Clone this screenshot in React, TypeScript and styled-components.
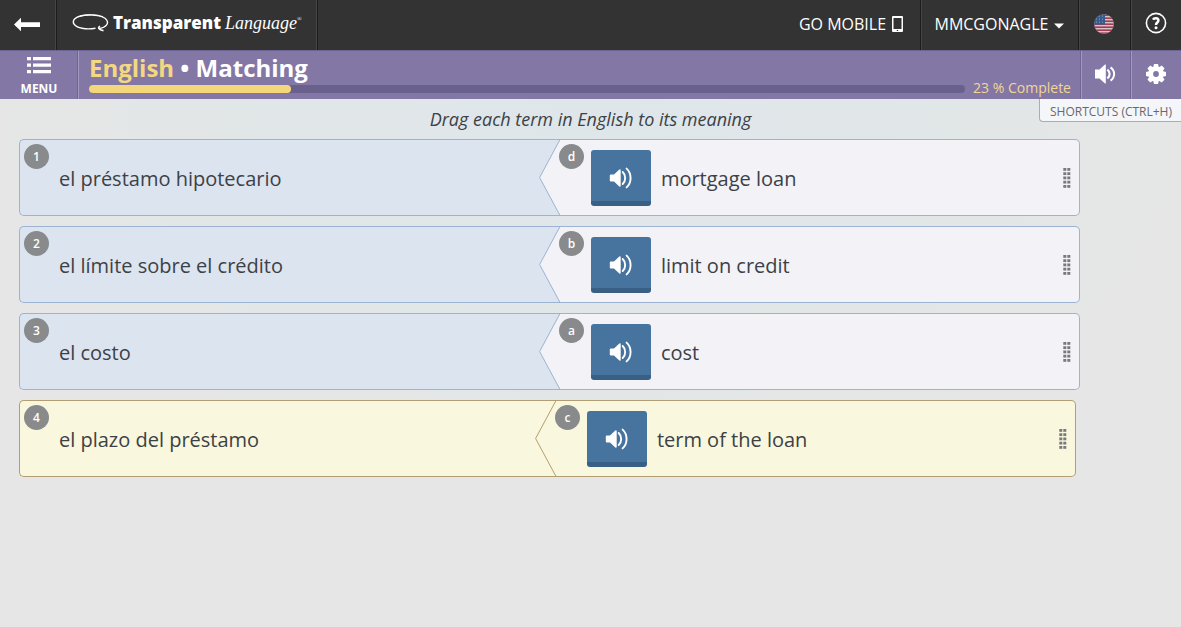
import React from 'react';
import styled, { createGlobalStyle } from 'styled-components';

const GlobalStyle = createGlobalStyle`
  *, *::before, *::after { box-sizing: border-box; }
  body {
    margin: 0;
    background: #e6e6e6;
    color: #3c4146;
    font-family: 'Open Sans', 'Noto Sans', sans-serif;
  }
  button { font-family: inherit; cursor: pointer; }
`;

const Page = styled.div`
  min-height: 100vh;
  background: radial-gradient(ellipse 50% 56% at 50% 20%, #dfe6ea 0%, #e1e6e8 55%, #e6e6e6 100%);
`;

const TopBar = styled.header`
  display: flex;
  height: 50px;
  background: #333333;
  color: #ffffff;
`;

const Spacer = styled.div`
  flex: 1;
`;

const TopButton = styled.button<{ $width: number; $edge?: 'left' | 'right' }>`
  display: flex;
  align-items: center;
  justify-content: center;
  gap: 6px;
  width: ${(p) => p.$width}px;
  padding: 0 0 2px;
  border: 0;
  border-left: ${(p) => (p.$edge === 'left' ? '1px solid #1c1c1c' : '0')};
  border-right: ${(p) => (p.$edge === 'right' ? '1px solid #1c1c1c' : '0')};
  box-shadow: ${(p) => (p.$edge === 'left' ? 'inset 1px 0 #454545' : p.$edge === 'right' ? 'inset -1px 0 #454545' : 'none')};
  background: transparent;
  color: inherit;
  font-size: 16px;
  line-height: 20px;
  white-space: nowrap;
`;

const Logo = styled.a`
  display: flex;
  align-items: center;
  gap: 4px;
  width: 261px;
  padding: 0 0 4px 15px;
  border-right: 1px solid #1c1c1c;
  box-shadow: inset -1px 0 #454545;
  color: #ffffff;
  text-decoration: none;
  white-space: nowrap;
`;

const LogoBold = styled.span`
  font-size: 17px;
  font-weight: 800;
  line-height: 24px;
`;

const LogoItalic = styled.span`
  font-family: 'Liberation Serif', serif;
  font-size: 18px;
  font-style: italic;
  line-height: 24px;
`;

const LogoMark = styled.sup`
  font-size: 6px;
  line-height: 1;
  vertical-align: 8px;
`;

const LessonBar = styled.div`
  display: flex;
  height: 49px;
  border-top: 1px solid #6d6390;
  background: #8377a6;
  color: #ffffff;
`;

const MenuButton = styled.button`
  display: flex;
  flex-direction: column;
  align-items: center;
  gap: 6px;
  width: 79px;
  padding: 6px 0 0;
  border: 0;
  border-right: 1px solid #a199be;
  box-shadow: inset -1px 0 #6f6494;
  background: transparent;
  color: inherit;
  font-size: 12px;
  font-weight: 700;
  line-height: 18px;
`;

const Lesson = styled.div`
  display: flex;
  flex: 1;
  align-items: flex-end;
  gap: 8px;
  padding: 0 9px 1px 10px;
`;

const LessonMain = styled.div`
  flex: 1;
  padding-bottom: 5px;
`;

const Title = styled.h1`
  margin: 0;
  font-size: 24px;
  font-weight: 700;
  line-height: 34px;
`;

const Course = styled.span`
  color: #f3d880;
`;

const Track = styled.div`
  height: 8px;
  border-radius: 4px;
  background: #6a608c;
`;

const Fill = styled.div`
  height: 100%;
  border-radius: 4px;
  background: #f5d77b;
`;

const Percent = styled.span`
  color: #f1d694;
  font-size: 14px;
  line-height: 20px;
`;

const ToolButton = styled.button`
  display: flex;
  align-items: center;
  justify-content: center;
  width: 50px;
  padding: 0 0 2px;
  border: 0;
  border-left: 1px solid #6f6494;
  box-shadow: inset 1px 0 #a199be;
  background: transparent;
  color: inherit;

  &:last-child { width: 51px; }
`;

const Exercise = styled.main`
  position: relative;
  padding: 0 101px 20px 19px;
`;

const Shortcuts = styled.button`
  position: absolute;
  top: 0;
  right: 0;
  width: 142px;
  height: 23px;
  padding: 3px 0 0 1px;
  border: 1px solid #a9adb0;
  border-width: 0 0 1px 1px;
  border-radius: 0 0 0 4px;
  background: #f5f6f9;
  color: #65696d;
  font-size: 12px;
  line-height: 18px;
`;

const Instruction = styled.p`
  margin: 0 -82px 0 0;
  padding: 8px 0;
  font-size: 18px;
  font-style: italic;
  line-height: 24px;
  text-align: center;
`;

const PairList = styled.ol`
  display: grid;
  gap: 10px;
  margin: 0;
  padding: 0;
  list-style: none;
`;

type Tone = { fillLeft: string; fillRight: string; line: string };
const idle: Tone = { fillLeft: '#dce4f0', fillRight: '#f2f2f7', line: '#9db3d3' };
const active: Tone = { fillLeft: '#f9f7dd', fillRight: '#f9f7dd', line: '#b39d72' };

const Pair = styled.li`
  display: grid;
  grid-template-columns: 49fr 51fr;
  min-height: 77px;
`;

const Term = styled.div<{ $tone: Tone }>`
  display: flex;
  align-items: center;
  gap: 10px;
  margin-right: -21px;
  padding: 0 24px 0 4px;
  border: 1px solid ${(p) => p.$tone.line};
  border-right: 0;
  border-radius: 5px 0 0 5px;
  background: ${(p) => p.$tone.fillLeft};
`;

const Meaning = styled.div<{ $joined: boolean }>`
  display: flex;
  margin: ${(p) => (p.$joined ? '0 4px 0 -4px' : '0')};
  cursor: grab;
`;

const Chevron = styled.svg`
  flex: none;
  width: 21px;
  height: 77px;
`;

const MeaningBody = styled.div<{ $tone: Tone }>`
  display: flex;
  flex: 1;
  align-items: center;
  padding-right: 8px;
  border: 1px solid ${(p) => p.$tone.line};
  border-left: 0;
  border-radius: 0 5px 5px 0;
  background: ${(p) => p.$tone.fillRight};

  & > :first-child { margin-left: -1px; }
`;

const Badge = styled.span`
  display: flex;
  flex: none;
  align-self: flex-start;
  align-items: center;
  justify-content: center;
  width: 25px;
  height: 25px;
  margin-top: 4px;
  border-radius: 50%;
  background: #888a8c;
  color: #ffffff;
  font-size: 12px;
  font-weight: 600;
  line-height: 16px;
`;

const Word = styled.span`
  flex: 1;
  padding-top: 2px;
  font-size: 20px;
  line-height: 28px;
`;

const Listen = styled.button`
  display: flex;
  align-items: center;
  justify-content: center;
  width: 60px;
  height: 56px;
  margin: 0 10px 0 7px;
  padding: 5px 0 0;
  border: 0;
  border-bottom: 5px solid #3a5f85;
  border-radius: 3px;
  background: #47739f;
  color: #ffffff;
`;

const ArrowIcon = () => (
  <svg width="28" height="15" viewBox="0 0 28 15" fill="currentColor" aria-hidden="true">
    <path d="M0 7.500 7 .8V5.200H26V10H7V14.200Z" />
  </svg>
);

const BubbleIcon = () => (
  <svg width="37" height="20" viewBox="0 0 37 20" fill="none" stroke="currentColor" aria-hidden="true">
    <path d="M27.500 15.600C34.500 14 36.500 10.500 35 7.500 32 1 9 .2 2.800 5.800-1 9.800 3 14 10 15.300 14 16 19 16 23.500 15.300" strokeWidth="1.400" />
    <path d="M8 3.400C15 .9 25 1 31 3.800" strokeWidth=".8" />
    <path d="M28 13.200C25.600 14.500 26.500 17 31.500 17.600" strokeWidth="1.700" />
  </svg>
);

const PhoneIcon = () => (
  <svg width="11" height="16" viewBox="0 0 11 16" aria-hidden="true">
    <path fillRule="evenodd" fill="currentColor" d="M1 0H10Q11 0 11 1V15Q11 16 10 16H1Q0 16 0 15V1Q0 0 1 0ZM1.500 2V13H9.500V2ZM4.800 14V15H6.200V14Z" />
  </svg>
);

const CaretIcon = () => (
  <svg width="10" height="9" viewBox="0 0 10 9" fill="currentColor" aria-hidden="true">
    <path d="M0 3.500H10L5 8.500Z" />
  </svg>
);

const FlagIcon = () => (
  <svg width="22" height="20" viewBox="0 0 22 20" aria-hidden="true">
    <clipPath id="flag-round"><circle cx="10" cy="10" r="9.800" /></clipPath>
    <g clipPath="url(#flag-round)">
      <rect width="20" height="20" fill="#d5c3ca" />
      {[0, 3, 6, 9, 12, 15, 18].map((y) => (
        <rect key={y} y={y + 0.4} width="20" height="1.600" fill="#a23d50" />
      ))}
      <rect width="11" height="10.500" fill="#355a8c" />
      {[2, 5, 8].map((y) =>
        [2, 5, 8].map((x) => <circle key={`${x}-${y}`} cx={x + 0.5} cy={y} r=".6" fill="#9bb0cb" />),
      )}
    </g>
  </svg>
);

const HelpIcon = () => (
  <svg width="22" height="24" viewBox="0 0 22 24" fill="none" stroke="currentColor" aria-hidden="true">
    <circle cx="11" cy="11" r="9.600" strokeWidth="1.600" />
    <path d="M8 7.700C9 5.800 13.400 5.600 13.400 8.500 13.400 10.700 11 10.400 11 13" strokeWidth="2.500" />
    <circle cx="11" cy="15.700" r="1.500" fill="currentColor" stroke="none" />
  </svg>
);

const ListIcon = () => (
  <svg width="24" height="17" viewBox="0 0 24 17" fill="currentColor" aria-hidden="true">
    {[0, 6.500, 13].map((y) => (
      <path key={y} d={`M0 ${y}H4V${y + 3.3}H0ZM6 ${y}H24V${y + 3.3}H6Z`} />
    ))}
  </svg>
);

const VolumeIcon = () => (
  <svg width="21" height="20" viewBox="0 0 21 20" fill="none" stroke="currentColor" aria-hidden="true">
    <path d="M0 5.500H4.500L10 .5H10.800V19.500H10L4.500 14.500H0Z" fill="currentColor" stroke="none" />
    <path d="M12.300 5.600C15.400 8 15.400 12 12.300 14.400" strokeWidth="2.200" />
    <path d="M15.500 3.300C20.300 6.500 20.300 13.500 15.500 16.700" strokeWidth="2" />
  </svg>
);

const GearIcon = () => (
  <svg width="20" height="20" viewBox="-10 -10 20 20" aria-hidden="true">
    <g fill="currentColor">
      {[0, 45, 90, 135].map((a) => (
        <path key={a} transform={`rotate(${a})`} d="M-2-10H2L3-6V6L2 10H-2L-3 6V-6Z" />
      ))}
      <circle r="7.600" />
    </g>
    <circle r="2.900" fill="#8377a6" />
  </svg>
);

const SpeakerIcon = () => (
  <svg width="23" height="22" viewBox="0 0 23 22" fill="none" stroke="currentColor" strokeLinecap="round" aria-hidden="true">
    <path d="M1.800 7.500H5L10.300 2.400Q11.700 1.600 11.700 3.200V18.800Q11.700 20.400 10.300 19.600L5 14.500H1.800Q.8 14.500 .8 13.500V8.500Q.8 7.500 1.800 7.500Z" fill="currentColor" stroke="none" />
    <path d="M13.700 5C17 8 17 14 13.700 17" strokeWidth="1.900" />
    <path d="M17.600 1.600C22.900 6.500 22.900 15.500 17.600 20.400" strokeWidth="1.900" />
  </svg>
);

const GripIcon = () => (
  <svg width="8" height="20" viewBox="0 0 8 20" fill="#77797c" aria-hidden="true">
    {[0, 1, 2, 3, 4].map((row) =>
      [0, 4].map((x) => <rect key={`${row}-${x}`} x={x + 0.3} y={row * 4.250} width="3" height="2.800" />),
    )}
  </svg>
);

const pairs = [
  { term: 'el préstamo hipotecario', letter: 'd', meaning: 'mortgage loan', joined: false },
  { term: 'el límite sobre el crédito', letter: 'b', meaning: 'limit on credit', joined: false },
  { term: 'el costo', letter: 'a', meaning: 'cost', joined: false },
  { term: 'el plazo del préstamo', letter: 'c', meaning: 'term of the loan', joined: true },
];

const progress = 23;

export default function App() {
  return (
    <Page>
      <GlobalStyle />
      <TopBar>
        <TopButton $width={57} $edge="right" aria-label="Back"><ArrowIcon /></TopButton>
        <Logo href="#" aria-label="Transparent Language home">
          <BubbleIcon />
          <LogoBold>Transparent</LogoBold>
          <LogoItalic>Language<LogoMark>®</LogoMark></LogoItalic>
        </Logo>
        <Spacer />
        <TopButton $width={138}>GO MOBILE <PhoneIcon /></TopButton>
        <TopButton $width={158} $edge="left">MMCGONAGLE <CaretIcon /></TopButton>
        <TopButton $width={52} $edge="left" aria-label="Site language"><FlagIcon /></TopButton>
        <TopButton $width={51} $edge="left" aria-label="Help"><HelpIcon /></TopButton>
      </TopBar>
      <LessonBar>
        <MenuButton><ListIcon />MENU</MenuButton>
        <Lesson>
          <LessonMain>
            <Title><Course>English</Course> • Matching</Title>
            <Track role="progressbar" aria-label="Lesson progress" aria-valuenow={progress} aria-valuemin={0} aria-valuemax={100}>
              <Fill style={{ width: `${progress}%` }} />
            </Track>
          </LessonMain>
          <Percent>{progress} % Complete</Percent>
        </Lesson>
        <ToolButton aria-label="Sound"><VolumeIcon /></ToolButton>
        <ToolButton aria-label="Settings"><GearIcon /></ToolButton>
      </LessonBar>
      <Exercise>
        <Shortcuts>SHORTCUTS (CTRL+H)</Shortcuts>
        <Instruction>Drag each term in English to its meaning</Instruction>
        <PairList>
          {pairs.map((pair, i) => {
            const tone = pair.joined ? active : idle;
            return (
              <Pair key={pair.letter}>
                <Term $tone={tone}>
                  <Badge>{i + 1}</Badge>
                  <Word>{pair.term}</Word>
                </Term>
                <Meaning $joined={pair.joined} draggable>
                  <Chevron viewBox="0 0 21 77" aria-hidden="true">
                    <path d="M21 1 .6 38.500 21 76Z" fill={tone.fillRight} />
                    <path d="M21 .5 .6 38.500 21 76.500" fill="none" stroke={tone.line} />
                  </Chevron>
                  <MeaningBody $tone={tone}>
                    <Badge>{pair.letter}</Badge>
                    <Listen aria-label={`Listen to ${pair.meaning}`}><SpeakerIcon /></Listen>
                    <Word>{pair.meaning}</Word>
                    <GripIcon />
                  </MeaningBody>
                </Meaning>
              </Pair>
            );
          })}
        </PairList>
      </Exercise>
    </Page>
  );
}
